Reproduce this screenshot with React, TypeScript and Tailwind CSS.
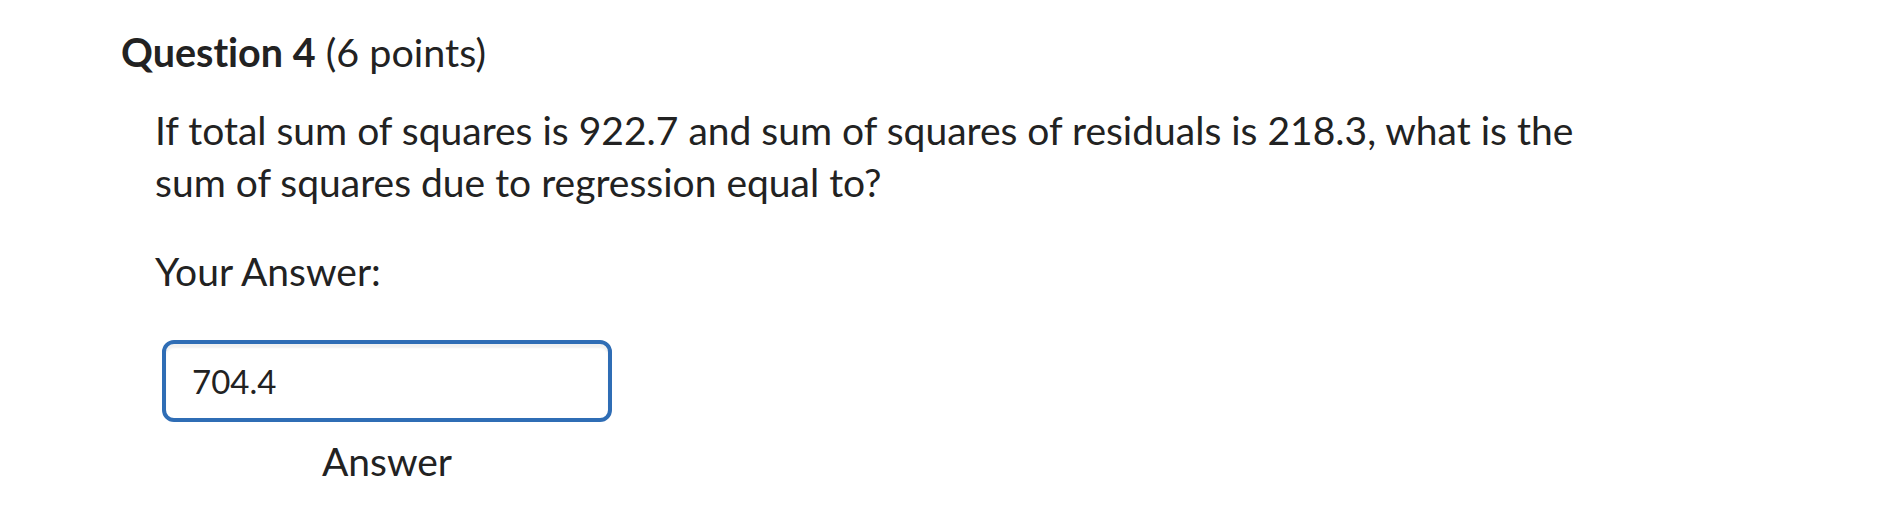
export default function App() {
  return (
    <div className="h-[522px] w-[1877px] bg-white font-['Lato',sans-serif] text-[#222222] [font-variant-ligatures:none]">
      <div className="pl-[121px] pt-[29px]">
        <h2 className="text-[39.5px] leading-[46px]">
          <span className="font-bold">Question 4</span> (6 points)
        </h2>
      </div>

      <div className="pl-[155px] pt-[29px]">
        <p className="w-[1450px] text-[39px] leading-[52px]">
          If total sum of squares is 922.7 and sum of squares of residuals is 218.3, what is the sum
          of squares due to regression equal to?
        </p>

        <div className="pt-[37px] text-[39px] leading-[52px]">Your Answer:</div>

        <div className="flex w-[457px] flex-col items-center pt-[43px] pl-[7px]">
          <input
            readOnly
            value="704.4"
            className="h-[82px] w-[450px] rounded-[12px] border-[4px] border-[#2f6db5] bg-white px-[26px] text-[33px] text-[#222222] shadow-[inset_0_4px_2px_rgba(0,0,0,0.06)] outline-none"
          />
          <div className="pt-[13px] text-[39px] leading-[52px]">Answer</div>
        </div>
      </div>
    </div>
  );
}
